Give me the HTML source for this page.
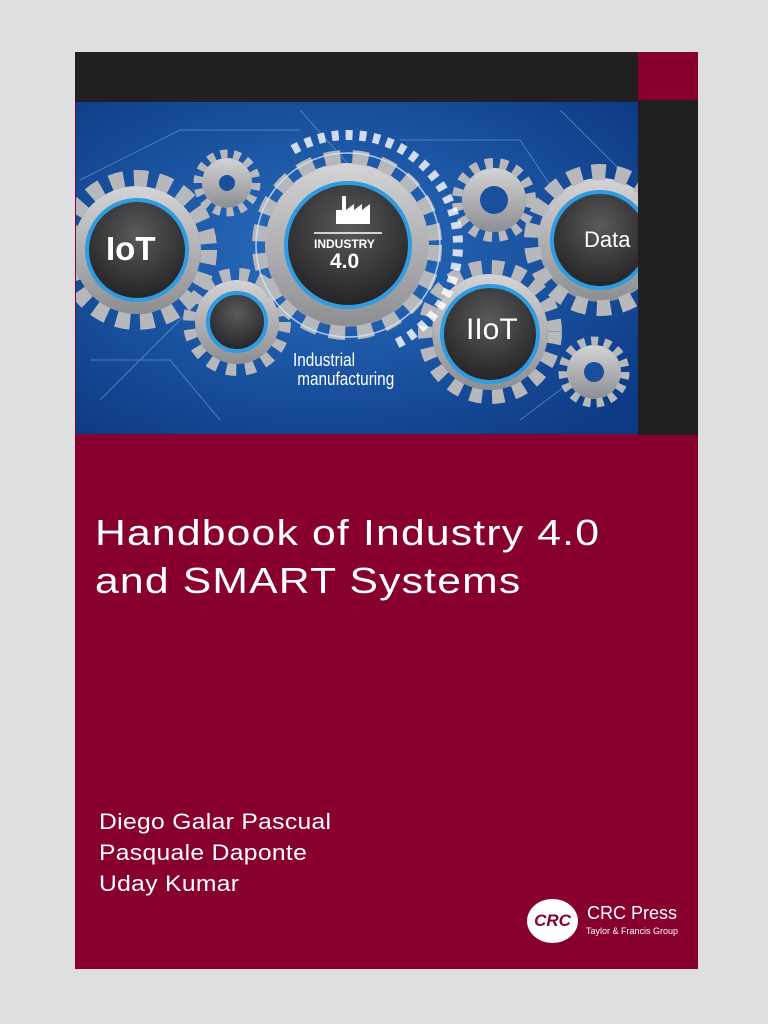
<!DOCTYPE html>
<html><head><meta charset="utf-8"><style>
html,body{margin:0;padding:0;background:#dedfe0;width:768px;height:1024px;overflow:hidden;font-family:"Liberation Sans",sans-serif}
.t{position:absolute;color:#fff;white-space:nowrap}
</style></head><body>
<svg width="768" height="1024" style="position:absolute;left:0;top:0">
<defs>
<clipPath id="c"><rect x="76" y="102" width="562" height="332"/></clipPath>
<radialGradient id="bg" cx="0.45" cy="0.45" r="0.7"><stop offset="0" stop-color="#2a6fc0"/><stop offset="1" stop-color="#0d3a85"/></radialGradient>
<radialGradient id="dk" cx="0.5" cy="0.35" r="0.7"><stop offset="0" stop-color="#5a5a5c"/><stop offset="1" stop-color="#1f1f21"/></radialGradient>
<linearGradient id="gy" x1="0" y1="0" x2="0" y2="1"><stop offset="0" stop-color="#d4d4d6"/><stop offset="1" stop-color="#8d8e92"/></linearGradient>
</defs>
<rect x="75" y="52" width="623" height="917" fill="#880030"/>
<rect x="75" y="52" width="563" height="50" fill="#221f20"/>
<rect x="638" y="100" width="60" height="335" fill="#221f20"/>
<g clip-path="url(#c)">
<rect x="76" y="102" width="562" height="332" fill="url(#bg)"/>
<g stroke="#7fb0e8" stroke-width="1" fill="none" opacity="0.5">
<path d="M80 180 L180 130 L300 130 M100 400 L200 300 M560 110 L620 170 L620 300 M400 140 L520 140 L560 200 M90 360 L170 360 L220 420 M520 420 L600 360 M300 110 L380 200"/>
</g>
<g fill="url(#gy)">
<circle cx="137" cy="250" r="64"/><circle cx="137" cy="250" r="72" fill="none" stroke="#b7b8bb" stroke-width="16" stroke-dasharray="14 10"/>
<circle cx="600" cy="240" r="62"/><circle cx="600" cy="240" r="68" fill="none" stroke="#b7b8bb" stroke-width="16" stroke-dasharray="14 10"/>
<circle cx="490" cy="332" r="58"/><circle cx="490" cy="332" r="65" fill="none" stroke="#b7b8bb" stroke-width="14" stroke-dasharray="12 10"/>
<circle cx="237" cy="322" r="42"/><circle cx="237" cy="322" r="48" fill="none" stroke="#b7b8bb" stroke-width="12" stroke-dasharray="10 9"/>
<circle cx="347" cy="245" r="82"/><circle cx="347" cy="245" r="88" fill="none" stroke="#b7b8bb" stroke-width="14" stroke-dasharray="16 12"/>
<circle cx="227" cy="183" r="25"/><circle cx="227" cy="183" r="29" fill="none" stroke="#b7b8bb" stroke-width="9" stroke-dasharray="7 6"/>
<circle cx="494" cy="200" r="32"/><circle cx="494" cy="200" r="37" fill="none" stroke="#b7b8bb" stroke-width="10" stroke-dasharray="8 7"/>
<circle cx="594" cy="372" r="27"/><circle cx="594" cy="372" r="31" fill="none" stroke="#b7b8bb" stroke-width="9" stroke-dasharray="7 6"/>
</g>
<circle cx="227" cy="183" r="8" fill="#1a4f9e"/><circle cx="494" cy="200" r="14" fill="#1a4f9e"/><circle cx="594" cy="372" r="10" fill="#1a4f9e"/>
<g stroke="#2f9be0" stroke-width="4" fill="url(#dk)">
<circle cx="137" cy="250" r="50"/><circle cx="600" cy="240" r="48"/><circle cx="490" cy="334" r="48"/><circle cx="237" cy="322" r="29"/><circle cx="348" cy="245" r="62"/>
</g>
<circle cx="348" cy="245" r="92" fill="none" stroke="#cfe6ff" stroke-width="1.5" opacity="0.8"/>
<circle cx="348" cy="245" r="110" fill="none" stroke="#fff" stroke-width="10" opacity="0.8" transform="rotate(-120 348 245)" pathLength="300" style="stroke-dasharray:3 3 3 3 3 3 3 3 3 3 3 3 3 3 3 3 3 3 3 3 3 3 3 3 3 3 3 3 3 3 3 3 3 3 3 3 3 3 3 3 3 3 3 3 3 3 3 3 3 3 3 150"/>
<path d="M336 210 h6 v-14 h4 v14 l8 -6 v6 l8 -6 v6 l8 -6 v20 h-34z" fill="#fff"/>
<line x1="314" y1="233" x2="382" y2="233" stroke="#fff" stroke-width="1.5"/>
</g>
</svg>
<div class="t" style="left:106px;top:230px;font-size:33px;font-weight:bold">IoT</div>
<div class="t" style="left:584px;top:227px;font-size:22px">Data</div>
<div class="t" style="left:466px;top:313px;font-size:30px">IIoT</div>
<div class="t" style="left:314px;top:237px;font-size:12px;font-weight:bold">INDUSTRY</div>
<div class="t" style="left:330px;top:250px;font-size:21px;font-weight:bold">4.0</div>
<div class="t" style="left:293px;top:351px;font-size:18px;line-height:19px;transform:scaleX(0.85);transform-origin:left">Industrial<br>&nbsp;manufacturing</div>
<div class="t" style="left:95px;top:509px;font-size:36px;line-height:48px;letter-spacing:1px;transform:scaleX(1.185);transform-origin:left">Handbook of Industry 4.0<br>and SMART Systems</div>
<div class="t" style="left:99px;top:806px;font-size:22px;line-height:31px;letter-spacing:0.3px;transform:scaleX(1.12);transform-origin:left">Diego Galar Pascual<br>Pasquale Daponte<br>Uday Kumar</div>
<div style="position:absolute;left:527px;top:899px;width:51px;height:44px;border-radius:50%;background:#fff;color:#880030;font-weight:bold;font-style:italic;font-size:17px;text-align:center;line-height:44px">CRC</div>
<div class="t" style="left:587px;top:903px;font-size:18px">CRC Press</div>
<div class="t" style="left:586px;top:926px;font-size:9px">Taylor &amp; Francis Group</div>
</body></html>
